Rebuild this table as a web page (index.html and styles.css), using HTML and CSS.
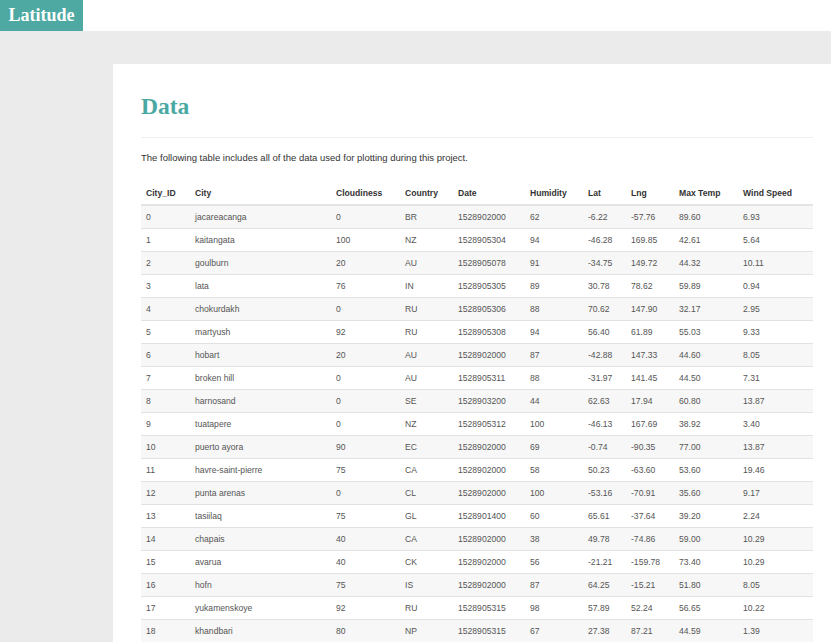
FILE: index.html
```html
<!DOCTYPE html>
<html>
<head>
<meta charset="utf-8">
<title>Data</title>
<link rel="stylesheet" href="styles.css">
</head>
<body>
<header class="topbar">
  <a class="brand" href="#">Latitude</a>
</header>
<main class="page">
  <section class="card">
    <h1 class="title">Data</h1>
    <hr class="rule">
    <p class="intro">The following table includes all of the data used for plotting during this project.</p>
    <table class="data">
      <colgroup>
        <col class="c1"><col class="c2"><col class="c3"><col class="c4"><col class="c5">
        <col class="c6"><col class="c7"><col class="c8"><col class="c9"><col class="c10">
      </colgroup>
      <thead>
        <tr><th>City_ID</th><th>City</th><th>Cloudiness</th><th>Country</th><th>Date</th><th>Humidity</th><th>Lat</th><th>Lng</th><th>Max Temp</th><th>Wind Speed</th></tr>
      </thead>
      <tbody>
        <tr><td>0</td><td>jacareacanga</td><td>0</td><td>BR</td><td>1528902000</td><td>62</td><td>-6.22</td><td>-57.76</td><td>89.60</td><td>6.93</td></tr>
        <tr><td>1</td><td>kaitangata</td><td>100</td><td>NZ</td><td>1528905304</td><td>94</td><td>-46.28</td><td>169.85</td><td>42.61</td><td>5.64</td></tr>
        <tr><td>2</td><td>goulburn</td><td>20</td><td>AU</td><td>1528905078</td><td>91</td><td>-34.75</td><td>149.72</td><td>44.32</td><td>10.11</td></tr>
        <tr><td>3</td><td>lata</td><td>76</td><td>IN</td><td>1528905305</td><td>89</td><td>30.78</td><td>78.62</td><td>59.89</td><td>0.94</td></tr>
        <tr><td>4</td><td>chokurdakh</td><td>0</td><td>RU</td><td>1528905306</td><td>88</td><td>70.62</td><td>147.90</td><td>32.17</td><td>2.95</td></tr>
        <tr><td>5</td><td>martyush</td><td>92</td><td>RU</td><td>1528905308</td><td>94</td><td>56.40</td><td>61.89</td><td>55.03</td><td>9.33</td></tr>
        <tr><td>6</td><td>hobart</td><td>20</td><td>AU</td><td>1528902000</td><td>87</td><td>-42.88</td><td>147.33</td><td>44.60</td><td>8.05</td></tr>
        <tr><td>7</td><td>broken hill</td><td>0</td><td>AU</td><td>1528905311</td><td>88</td><td>-31.97</td><td>141.45</td><td>44.50</td><td>7.31</td></tr>
        <tr><td>8</td><td>harnosand</td><td>0</td><td>SE</td><td>1528903200</td><td>44</td><td>62.63</td><td>17.94</td><td>60.80</td><td>13.87</td></tr>
        <tr><td>9</td><td>tuatapere</td><td>0</td><td>NZ</td><td>1528905312</td><td>100</td><td>-46.13</td><td>167.69</td><td>38.92</td><td>3.40</td></tr>
        <tr><td>10</td><td>puerto ayora</td><td>90</td><td>EC</td><td>1528902000</td><td>69</td><td>-0.74</td><td>-90.35</td><td>77.00</td><td>13.87</td></tr>
        <tr><td>11</td><td>havre-saint-pierre</td><td>75</td><td>CA</td><td>1528902000</td><td>58</td><td>50.23</td><td>-63.60</td><td>53.60</td><td>19.46</td></tr>
        <tr><td>12</td><td>punta arenas</td><td>0</td><td>CL</td><td>1528902000</td><td>100</td><td>-53.16</td><td>-70.91</td><td>35.60</td><td>9.17</td></tr>
        <tr><td>13</td><td>tasiilaq</td><td>75</td><td>GL</td><td>1528901400</td><td>60</td><td>65.61</td><td>-37.64</td><td>39.20</td><td>2.24</td></tr>
        <tr><td>14</td><td>chapais</td><td>40</td><td>CA</td><td>1528902000</td><td>38</td><td>49.78</td><td>-74.86</td><td>59.00</td><td>10.29</td></tr>
        <tr><td>15</td><td>avarua</td><td>40</td><td>CK</td><td>1528902000</td><td>56</td><td>-21.21</td><td>-159.78</td><td>73.40</td><td>10.29</td></tr>
        <tr><td>16</td><td>hofn</td><td>75</td><td>IS</td><td>1528902000</td><td>87</td><td>64.25</td><td>-15.21</td><td>51.80</td><td>8.05</td></tr>
        <tr><td>17</td><td>yukamenskoye</td><td>92</td><td>RU</td><td>1528905315</td><td>98</td><td>57.89</td><td>52.24</td><td>56.65</td><td>10.22</td></tr>
        <tr><td>18</td><td>khandbari</td><td>80</td><td>NP</td><td>1528905315</td><td>67</td><td>27.38</td><td>87.21</td><td>44.59</td><td>1.39</td></tr>
      </tbody>
    </table>
  </section>
</main>
</body>
</html>
```
FILE: styles.css
```css
html, body {
  margin: 0;
  padding: 0;
}
body {
  background: #ebebeb;
  font-family: "Liberation Sans", Arial, sans-serif;
  color: #333;
  overflow-x: hidden;
}
.topbar {
  background: #fff;
  height: 31px;
  display: flex;
}
.brand {
  display: flex;
  align-items: center;
  justify-content: center;
  width: 83px;
  height: 31px;
  background: #4ea9a3;
  color: #fff;
  text-decoration: none;
  font-family: "Liberation Serif", "Times New Roman", serif;
  font-weight: bold;
  font-size: 18px;
  box-sizing: border-box;
}
.page {
  padding: 33px 0 0 113px;
}
.card {
  background: #fff;
  width: 672px;
  padding: 28px 28px 0 28px;
  min-height: 600px;
}
.title {
  margin: 0;
  padding-top: 0;
  color: #4aa9a3;
  font-family: "Liberation Serif", "Times New Roman", serif;
  font-weight: bold;
  font-size: 23.5px;
  line-height: 28px;
}
.rule {
  border: 0;
  border-top: 1px solid #eeeeee;
  margin: 17px 0 0 0;
  height: 0;
}
.intro {
  margin: 14px 0 0 0;
  font-size: 9.5px;
  line-height: 12px;
  color: #333;
}
.data {
  margin-top: 18px;
  width: 672px;
  border-collapse: collapse;
  table-layout: fixed;
  font-size: 8.6px;
}
.c1 { width: 49px; }
.c2 { width: 141px; }
.c3 { width: 69px; }
.c4 { width: 53px; }
.c5 { width: 72px; }
.c6 { width: 58px; }
.c7 { width: 43px; }
.c8 { width: 48px; }
.c9 { width: 64px; }
.c10 { width: 75px; }
.data th {
  text-align: left;
  font-weight: bold;
  color: #333;
  padding: 0 5px;
  height: 22px;
  border-bottom: 2px solid #e4e4e4;
  white-space: nowrap;
}
.data td {
  padding: 0 5px;
  height: 22px;
  border-top: 1px solid #e2e2e2;
  color: #555;
  white-space: nowrap;
}
.data tbody tr:first-child td {
  border-top: 0;
}
.data tbody tr:nth-child(odd) {
  background: #f7f7f7;
}
```
